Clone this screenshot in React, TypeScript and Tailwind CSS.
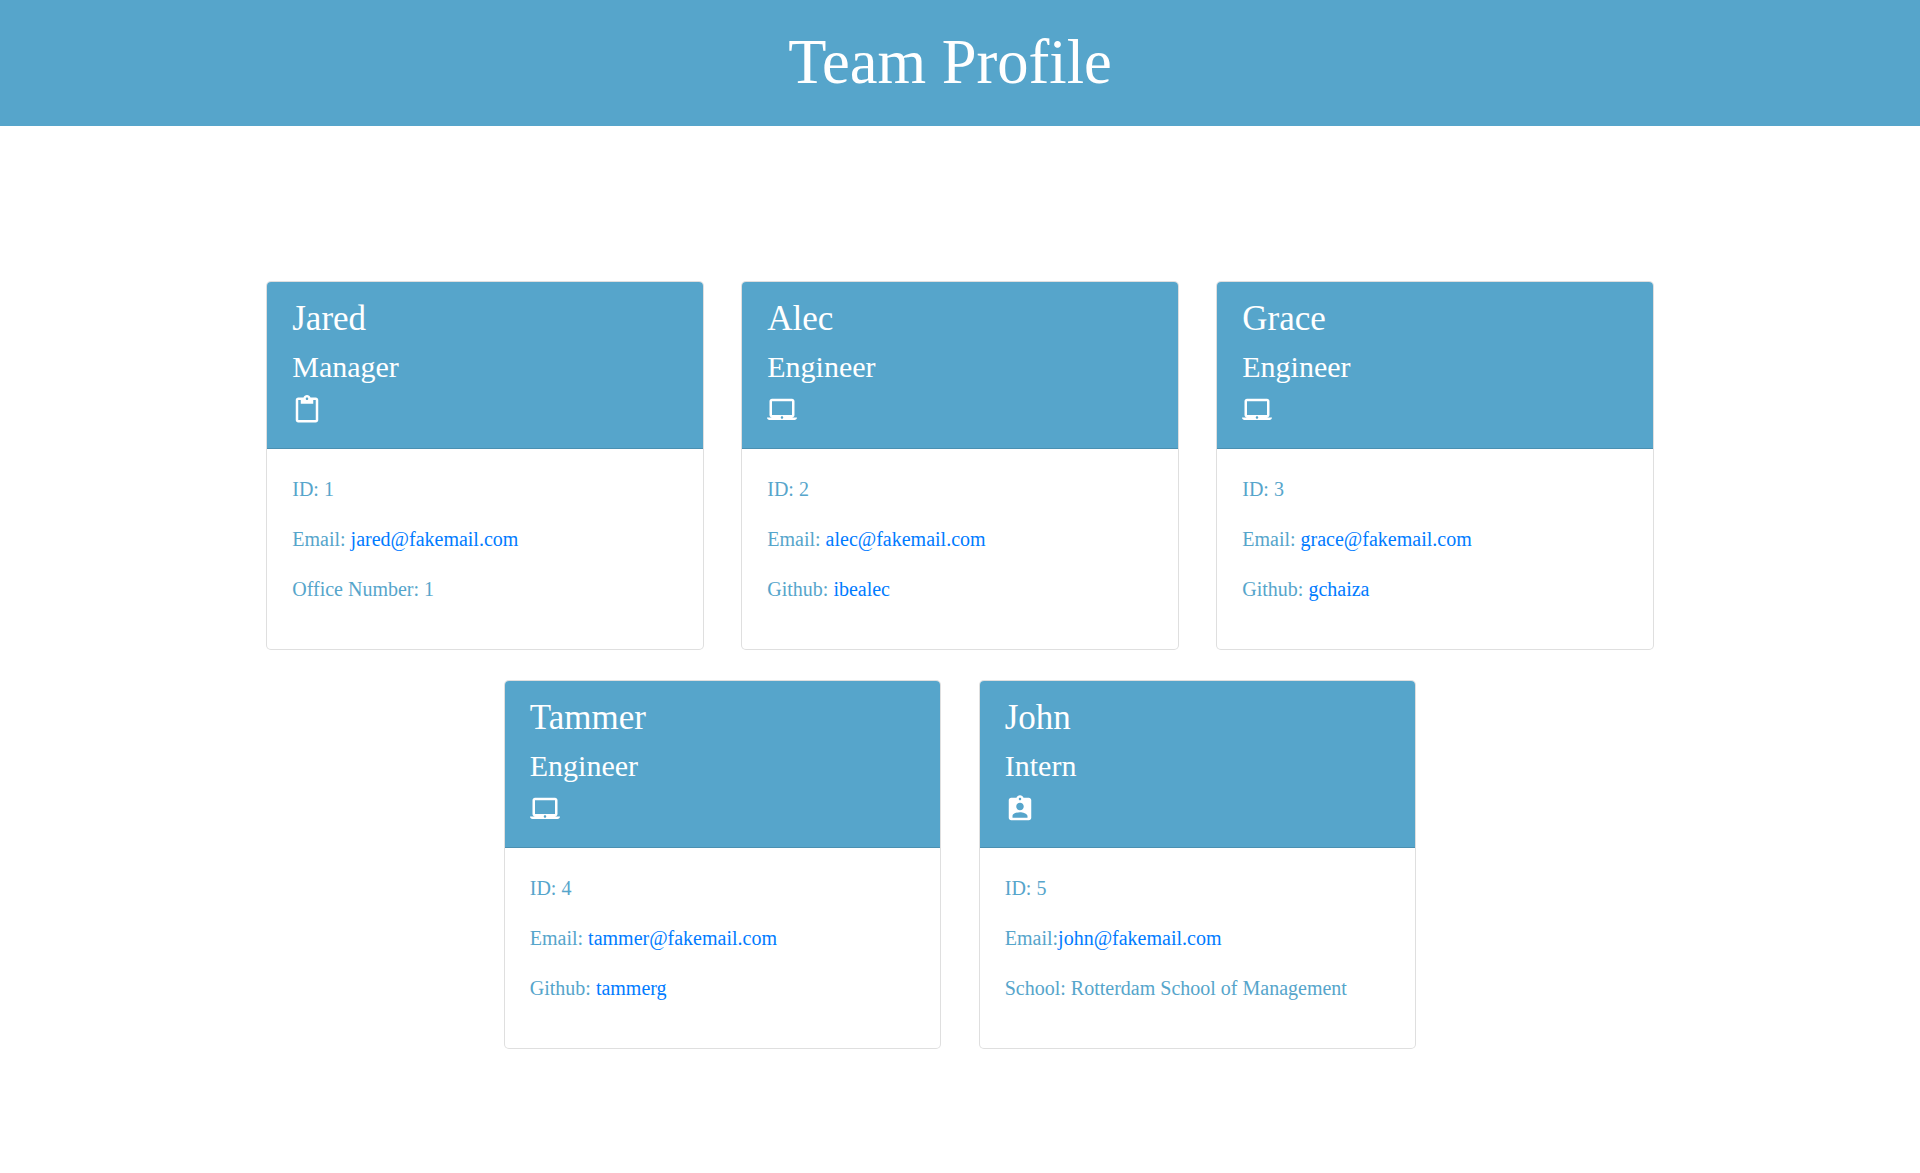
const clipboardPath =
  "M19 2h-4.18C14.4.84 13.3 0 12 0c-1.3 0-2.4.84-2.82 2H5c-1.1 0-2 .9-2 2v16c0 1.1.9 2 2 2h14c1.1 0 2-.9 2-2V4c0-1.1-.9-2-2-2zm-7 0c.55 0 1 .45 1 1s-.45 1-1 1-1-.45-1-1 .45-1 1-1zm7 18H5V4h2v3h10V4h2v16z";
const laptopPath =
  "M20 18c1.1 0 1.99-.9 1.99-2L22 5c0-1.1-.9-2-2-2H4c-1.1 0-2 .9-2 2v11c0 1.1.9 2 2 2H0c0 1.1.9 2 2 2h20c1.1 0 2-.9 2-2h-4zM4 5h16v11H4V5zm8 14c-.55 0-1-.45-1-1s.45-1 1-1 1 .45 1 1-.45 1-1 1z";
const badgePath =
  "M19 3h-4.18C14.4 1.84 13.3 1 12 1c-1.3 0-2.4.84-2.82 2H5c-1.1 0-2 .9-2 2v14c0 1.1.9 2 2 2h14c1.1 0 2-.9 2-2V5c0-1.1-.9-2-2-2zm-7 0c.55 0 1 .45 1 1s-.45 1-1 1-1-.45-1-1 .45-1 1-1zm0 4c1.66 0 3 1.34 3 3s-1.34 3-3 3-3-1.34-3-3 1.34-3 3-3zm6 12H6v-1.4c0-2 4-3.1 6-3.1s6 1.1 6 3.1V19z";

interface Member {
  name: string;
  role: string;
  icon: string;
  id: number;
  email: string;
  emailGap: boolean;
  lastLabel: string;
  lastValue: string;
  lastIsLink: boolean;
}

const team: Member[] = [
  { name: "Jared", role: "Manager", icon: clipboardPath, id: 1, email: "jared@fakemail.com", emailGap: true, lastLabel: "Office Number: 1", lastValue: "", lastIsLink: false },
  { name: "Alec", role: "Engineer", icon: laptopPath, id: 2, email: "alec@fakemail.com", emailGap: true, lastLabel: "Github: ", lastValue: "ibealec", lastIsLink: true },
  { name: "Grace", role: "Engineer", icon: laptopPath, id: 3, email: "grace@fakemail.com", emailGap: true, lastLabel: "Github: ", lastValue: "gchaiza", lastIsLink: true },
  { name: "Tammer", role: "Engineer", icon: laptopPath, id: 4, email: "tammer@fakemail.com", emailGap: true, lastLabel: "Github: ", lastValue: "tammerg", lastIsLink: true },
  { name: "John", role: "Intern", icon: badgePath, id: 5, email: "john@fakemail.com", emailGap: false, lastLabel: "School: Rotterdam School of Management", lastValue: "", lastIsLink: false },
];

function MemberCard({ member }: { member: Member }) {
  return (
    <div className="h-[369px] w-[437.5px] overflow-hidden rounded-[5px] border border-black/[.125] bg-white">
      <div className="h-[167px] border-b border-black/[.125] bg-[#56a5cb] px-[25px] pt-[16px] text-white">
        <h2 className="text-[35px] leading-[42px]">{member.name}</h2>
        <h3 className="mt-[9px] text-[30px] leading-[36px]">{member.role}</h3>
        <svg viewBox="0 0 24 24" className="mt-[10px] h-[30px] w-[30px] fill-white">
          <path d={member.icon} />
        </svg>
      </div>
      <div className="px-[25px] pt-[25px] text-[20px] leading-[30px] text-[#56a5cb]">
        <p className="mb-5">ID: {member.id}</p>
        <p className="mb-5">
          Email:{member.emailGap ? " " : ""}
          <a href="#" className="text-[#007bff]">
            {member.email}
          </a>
        </p>
        <p>
          {member.lastLabel}
          {member.lastIsLink && (
            <a href="#" className="text-[#007bff]">
              {member.lastValue}
            </a>
          )}
        </p>
      </div>
    </div>
  );
}

export default function App() {
  return (
    <div className="min-h-[1173px] bg-white font-['Liberation_Serif',serif]">
      <header className="flex h-[126px] items-center justify-center bg-[#56a5cb] pr-5 text-white">
        <h1 className="-mt-[1px] text-[62.5px] leading-[75px]">Team Profile</h1>
      </header>
      <main className="mx-auto flex w-[1426px] flex-wrap justify-center gap-x-[37.5px] gap-y-[30px] pt-[155px]">
        {team.map((member) => (
          <MemberCard key={member.id} member={member} />
        ))}
      </main>
    </div>
  );
}
